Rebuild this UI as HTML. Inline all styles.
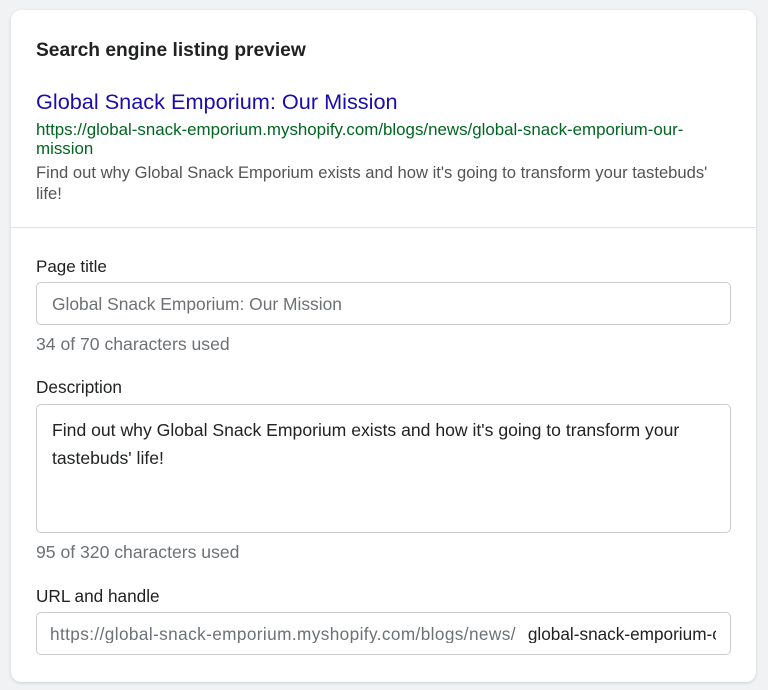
<!DOCTYPE html>
<html><head><style>
body{margin:0;background:#f1f2f4;font-family:"Liberation Sans",sans-serif;width:768px;height:690px;overflow:hidden;position:relative}
.card{position:absolute;left:11px;top:10px;width:745px;height:672px;background:#fff;border-radius:10px;box-shadow:0 1px 3px rgba(0,0,0,.15)}
.t{position:absolute;left:25px;white-space:nowrap;line-height:1}
.inp{position:absolute;left:25px;width:693px;border:1px solid #c9cccf;border-radius:5px;background:#fff;overflow:hidden}
</style></head><body>
<div class="card">
<div class="t" style="top:31px;font-size:19.2px;font-weight:bold;color:#202223">Search engine listing preview</div>
<div class="t" style="top:81px;font-size:21.7px;color:#1a0dab">Global Snack Emporium: Our Mission</div>
<div class="t" style="top:110px;font-size:16.9px;color:#006621;line-height:19px">https://global-snack-emporium.myshopify.com/blogs/news/global-snack-emporium-our-<br>mission</div>
<div class="t" style="top:152px;font-size:16.6px;color:#545454;line-height:21px">Find out why Global Snack Emporium exists and how it's going to transform your tastebuds'<br>life!</div>
<div style="position:absolute;left:0;right:0;top:217px;border-top:1px solid #e1e3e5"></div>
<div class="t" style="top:248px;font-size:17px;color:#202223">Page title</div>
<div class="inp" style="top:272px;height:41px"><div class="t" style="left:15px;top:13px;font-size:17.4px;color:#6d7175">Global Snack Emporium: Our Mission</div></div>
<div class="t" style="top:326px;font-size:17.6px;color:#6d7175">34 of 70 characters used</div>
<div class="t" style="top:369px;font-size:17.2px;color:#202223">Description</div>
<div class="inp" style="top:394px;height:127px"><div class="t" style="left:15px;top:11px;font-size:17.6px;color:#202223;line-height:28px">Find out why Global Snack Emporium exists and how it's going to transform your<br>tastebuds' life!</div></div>
<div class="t" style="top:534px;font-size:17.6px;color:#6d7175">95 of 320 characters used</div>
<div class="t" style="top:578px;font-size:17.2px;color:#202223">URL and handle</div>
<div class="inp" style="top:602px;height:41px"><div style="position:absolute;left:13px;top:13px;width:666px;overflow:hidden;white-space:nowrap;line-height:1;font-size:17.2px;letter-spacing:0.4px;color:#6d7175">https://global-snack-emporium.myshopify.com/blogs/news/<span style="display:inline-block;width:12px"></span><span style="color:#202223;letter-spacing:0">global-snack-emporium-our-mission</span></div></div>
</div>
</body></html>
